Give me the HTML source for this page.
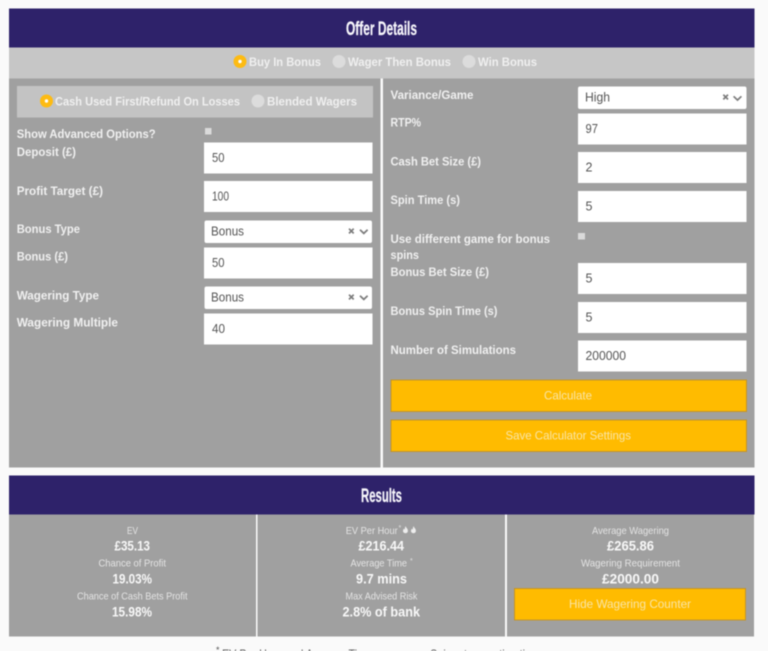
<!DOCTYPE html>
<html lang="en">
<head>
<meta charset="utf-8">
<title>Offer Details</title>
<style>
html,body{margin:0;padding:0;width:768px;height:651px;overflow:hidden;background:#fafafa}
svg{display:block;filter:blur(.45px)}
text{font-family:"Liberation Sans",sans-serif;white-space:pre}
.h{font-weight:700;font-size:19px;fill:#f7f6fb;stroke:#f7f6fb;stroke-width:.25}
.l{font-weight:700;font-size:12px;fill:#f0f0f0}
.r{font-weight:700;font-size:12px;fill:#f0f0f0}
.v{font-size:12.5px;fill:#555555}
.b{font-size:12px;fill:#f9e5a6}
.rl{font-size:10.5px;fill:#e4e4e4}
.rv{font-weight:700;font-size:13.5px;fill:#f8f8f8}
.f{font-size:12px;fill:#555555}
.in{fill:#fff}
.sel{fill:#fff}
.btn{fill:#ffbb00;stroke:#c2932a;stroke-width:1}
.ic{fill:none;stroke:#7b7b7b;stroke-width:1.7}
</style>
</head>
<body>
<svg width="768" height="651" viewBox="0 0 768 651" xmlns="http://www.w3.org/2000/svg">
<rect width="768" height="651" fill="#fafafa"/>

<!-- Offer Details -->
<rect x="9" y="8.500" width="745.500" height="39" fill="#2e226a"/>
<text class="h" x="346" y="35" textLength="71" lengthAdjust="spacingAndGlyphs">Offer Details</text>
<rect x="9" y="47.500" width="745.500" height="31" fill="#c6c6c6"/>

<circle cx="240" cy="61.500" r="6.500" fill="#fdbb13"/><circle cx="240" cy="61.500" r="1.700" fill="#fff"/>
<text class="r" x="249" y="66" textLength="72" lengthAdjust="spacingAndGlyphs">Buy In Bonus</text>
<circle cx="339" cy="61.500" r="6.500" fill="#dcdcdc"/>
<text class="r" x="348" y="66" textLength="103" lengthAdjust="spacingAndGlyphs">Wager Then Bonus</text>
<circle cx="469" cy="61.500" r="6.500" fill="#dcdcdc"/>
<text class="r" x="478" y="66" textLength="59" lengthAdjust="spacingAndGlyphs">Win Bonus</text>

<!-- Panels -->
<rect x="9" y="78.500" width="371.500" height="389" fill="#a0a0a0"/>
<rect x="383" y="78.500" width="371.500" height="389" fill="#a0a0a0"/>

<!-- Left panel -->
<rect x="17" y="86" width="356" height="31.500" fill="#c3c3c3"/>
<circle cx="46.500" cy="101" r="6.500" fill="#fdbb13"/><circle cx="46.500" cy="101" r="1.700" fill="#fff"/>
<text class="r" x="55" y="105.500" textLength="185" lengthAdjust="spacingAndGlyphs">Cash Used First/Refund On Losses</text>
<circle cx="258" cy="101" r="6.500" fill="#dcdcdc"/>
<text class="r" x="267" y="105.500" textLength="90" lengthAdjust="spacingAndGlyphs">Blended Wagers</text>

<text class="l" x="16.700" y="138" textLength="139" lengthAdjust="spacingAndGlyphs">Show Advanced Options?</text>
<rect x="205" y="128" width="6.500" height="6.500" fill="#dadada"/>

<text class="l" x="16.700" y="156" textLength="59.300" lengthAdjust="spacingAndGlyphs">Deposit (£)</text>
<rect class="in" x="204" y="142.500" width="168.500" height="31"/>
<text class="v" x="212" y="162" textLength="12.500" lengthAdjust="spacingAndGlyphs">50</text>

<text class="l" x="16.700" y="195" textLength="86.300" lengthAdjust="spacingAndGlyphs">Profit Target (£)</text>
<rect class="in" x="204" y="181" width="168.500" height="31"/>
<text class="v" x="212" y="200.500" textLength="17" lengthAdjust="spacingAndGlyphs">100</text>

<text class="l" x="16.700" y="233" textLength="63.300" lengthAdjust="spacingAndGlyphs">Bonus Type</text>
<rect class="sel" x="204.500" y="220.500" width="167.500" height="22.500" rx="2"/>
<text class="v" x="211" y="235.500" textLength="33" lengthAdjust="spacingAndGlyphs">Bonus</text>
<path class="ic" d="M349 228.700l4.700 4.700M353.700 228.700l-4.700 4.700"/>
<path class="ic" d="M360 229.800l3.800 3.600 3.800-3.600"/>

<text class="l" x="16.700" y="260.500" textLength="51.300" lengthAdjust="spacingAndGlyphs">Bonus (£)</text>
<rect class="in" x="204" y="247.500" width="168.500" height="31"/>
<text class="v" x="212" y="267" textLength="12.500" lengthAdjust="spacingAndGlyphs">50</text>

<text class="l" x="16.700" y="299.500" textLength="82.300" lengthAdjust="spacingAndGlyphs">Wagering Type</text>
<rect class="sel" x="204.500" y="286.500" width="167.500" height="22.500" rx="2"/>
<text class="v" x="211" y="301.500" textLength="33" lengthAdjust="spacingAndGlyphs">Bonus</text>
<path class="ic" d="M349 294.700l4.700 4.700M353.700 294.700l-4.700 4.700"/>
<path class="ic" d="M360 295.800l3.800 3.600 3.800-3.600"/>

<text class="l" x="16.700" y="326.500" textLength="101.300" lengthAdjust="spacingAndGlyphs">Wagering Multiple</text>
<rect class="in" x="204" y="313.500" width="168.500" height="31"/>
<text class="v" x="212" y="333" textLength="13" lengthAdjust="spacingAndGlyphs">40</text>

<!-- Right panel -->
<text class="l" x="390.500" y="99" textLength="83" lengthAdjust="spacingAndGlyphs">Variance/Game</text>
<rect class="sel" x="578" y="86.500" width="168.500" height="22.500" rx="2"/>
<text class="v" x="585" y="101.500" textLength="25" lengthAdjust="spacingAndGlyphs">High</text>
<path class="ic" d="M723.300 94.700l4.700 4.700M728 94.700l-4.700 4.700"/>
<path class="ic" d="M733.600 96.300l3.900 3.800 3.900-3.800"/>

<text class="l" x="390.500" y="126.500" textLength="30.500" lengthAdjust="spacingAndGlyphs">RTP%</text>
<rect class="in" x="578" y="113.500" width="168.500" height="31"/>
<text class="v" x="585.500" y="133" textLength="12.500" lengthAdjust="spacingAndGlyphs">97</text>

<text class="l" x="390.500" y="165.500" textLength="90.500" lengthAdjust="spacingAndGlyphs">Cash Bet Size (£)</text>
<rect class="in" x="578" y="152" width="168.500" height="31"/>
<text class="v" x="585.500" y="171.500">2</text>

<text class="l" x="390.500" y="204" textLength="69.500" lengthAdjust="spacingAndGlyphs">Spin Time (s)</text>
<rect class="in" x="578" y="191" width="168.500" height="31"/>
<text class="v" x="585.500" y="210.500">5</text>

<text class="l" x="390.500" y="243" textLength="159.500" lengthAdjust="spacingAndGlyphs">Use different game for bonus</text>
<text class="l" x="390.500" y="259" textLength="28.500" lengthAdjust="spacingAndGlyphs">spins</text>
<rect x="578" y="233" width="7" height="6.500" fill="#dadada"/>

<text class="l" x="390.500" y="276" textLength="98.500" lengthAdjust="spacingAndGlyphs">Bonus Bet Size (£)</text>
<rect class="in" x="578" y="263" width="168.500" height="31"/>
<text class="v" x="585.500" y="282.500">5</text>

<text class="l" x="390.500" y="315" textLength="107" lengthAdjust="spacingAndGlyphs">Bonus Spin Time (s)</text>
<rect class="in" x="578" y="302" width="168.500" height="31"/>
<text class="v" x="585.500" y="321.500">5</text>

<text class="l" x="390.500" y="354" textLength="125.500" lengthAdjust="spacingAndGlyphs">Number of Simulations</text>
<rect class="in" x="578" y="340.500" width="168.500" height="31"/>
<text class="v" x="585.500" y="360" textLength="40.500" lengthAdjust="spacingAndGlyphs">200000</text>

<rect class="btn" x="391" y="380" width="355.500" height="31.500"/>
<text class="b" x="544" y="399.500" textLength="48" lengthAdjust="spacingAndGlyphs">Calculate</text>
<rect class="btn" x="391" y="420" width="355.500" height="31.500"/>
<text class="b" x="505.500" y="439.500" textLength="125.500" lengthAdjust="spacingAndGlyphs">Save Calculator Settings</text>

<!-- Results -->
<rect x="9" y="475.500" width="745.500" height="39" fill="#2e226a"/>
<text class="h" x="361" y="502" textLength="41" lengthAdjust="spacingAndGlyphs">Results</text>
<rect x="9" y="514.500" width="247" height="122" fill="#a0a0a0"/>
<rect x="257.500" y="514.500" width="247.500" height="122" fill="#a0a0a0"/>
<rect x="507" y="514.500" width="247" height="122" fill="#a0a0a0"/>

<text class="rl" x="127" y="534" textLength="11" lengthAdjust="spacingAndGlyphs">EV</text>
<text class="rv" x="114.500" y="550.500" textLength="35.500" lengthAdjust="spacingAndGlyphs">£35.13</text>
<text class="rl" x="98.500" y="566.500" textLength="67.500" lengthAdjust="spacingAndGlyphs">Chance of Profit</text>
<text class="rv" x="112.500" y="583.500" textLength="39.500" lengthAdjust="spacingAndGlyphs">19.03%</text>
<text class="rl" x="77" y="599.500" textLength="110.500" lengthAdjust="spacingAndGlyphs">Chance of Cash Bets Profit</text>
<text class="rv" x="112" y="616.500" textLength="40" lengthAdjust="spacingAndGlyphs">15.98%</text>

<text class="rl" x="345.700" y="534" textLength="52" lengthAdjust="spacingAndGlyphs">EV Per Hour</text>
<text class="rl" x="398.500" y="530" style="font-size:7px">*</text>
<path fill="#eeeeee" d="M405.500 526c.5 1.500 1.200 1.800 1.800 2.900.4.800.6 1.300.6 2 0 1.500-1.100 2.300-2.400 2.300s-2.500-.8-2.500-2.300c0-1 .5-1.500.9-2.300.2.500.5.800.8 1 .1-1.300.4-2.400.8-3.600z"/>
<path fill="#eeeeee" d="M413.500 526c.5 1.500 1.200 1.800 1.800 2.900.4.800.6 1.300.6 2 0 1.500-1.100 2.300-2.400 2.300s-2.500-.8-2.500-2.300c0-1 .5-1.500.9-2.300.2.500.5.800.8 1 .1-1.300.4-2.400.8-3.600z"/>
<text class="rv" x="358.500" y="550.500" textLength="45.500" lengthAdjust="spacingAndGlyphs">£216.44</text>
<text class="rl" x="350.500" y="566.500" textLength="56.500" lengthAdjust="spacingAndGlyphs">Average Time</text>
<text class="rl" x="410" y="563" style="font-size:7px">*</text>
<text class="rv" x="356" y="583.500" textLength="51" lengthAdjust="spacingAndGlyphs">9.7 mins</text>
<text class="rl" x="345.500" y="599.500" textLength="72" lengthAdjust="spacingAndGlyphs">Max Advised Risk</text>
<text class="rv" x="342.500" y="616.500" textLength="77.500" lengthAdjust="spacingAndGlyphs">2.8% of bank</text>

<text class="rl" x="592" y="534" textLength="77" lengthAdjust="spacingAndGlyphs">Average Wagering</text>
<text class="rv" x="607" y="550.500" textLength="47" lengthAdjust="spacingAndGlyphs">£265.86</text>
<text class="rl" x="581" y="566.500" textLength="99" lengthAdjust="spacingAndGlyphs">Wagering Requirement</text>
<text class="rv" x="602" y="583.500" textLength="57" lengthAdjust="spacingAndGlyphs">£2000.00</text>
<rect class="btn" x="514.500" y="588.500" width="231" height="31.500"/>
<text class="b" x="569" y="608" textLength="122" lengthAdjust="spacingAndGlyphs">Hide Wagering Counter</text>

<!-- Footnote, clipped by the bottom edge -->
<text class="f" x="216" y="653" style="font-size:9px">*</text>
<text class="f" x="222" y="658" textLength="318" lengthAdjust="spacingAndGlyphs">EV Per Hour and Average Time assumes a Spin + transaction time</text>
</svg>
</body>
</html>
